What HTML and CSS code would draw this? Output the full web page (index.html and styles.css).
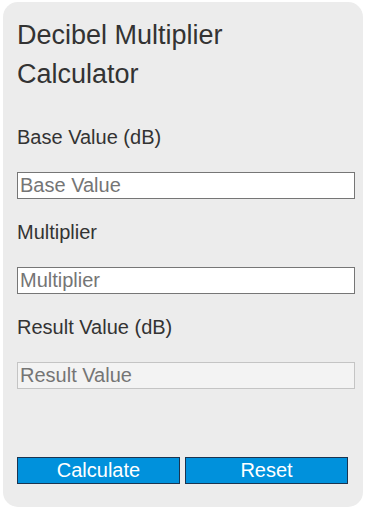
FILE: index.html
```html
<!DOCTYPE html>
<html lang="en">
<head>
    <meta charset="UTF-8">
    <meta name="viewport" content="width=device-width, initial-scale=1.0">
    <title>Decibel Multiplier Calculator</title>
    <link rel="stylesheet" href="styles.css">
</head>
<body>
    <div class="calculator">
        <h1 class="title">Decibel Multiplier Calculator</h1>
        <div class="field">
            <label for="base-value">Base Value (dB)</label>
            <input type="number" id="base-value" placeholder="Base Value">
        </div>
        <div class="field">
            <label for="multiplier">Multiplier</label>
            <input type="number" id="multiplier" placeholder="Multiplier">
        </div>
        <div class="field">
            <label for="result-value">Result Value (dB)</label>
            <input type="text" id="result-value" placeholder="Result Value" readonly>
        </div>
        <!-- calculate and reset -->
        <div class="buttons">
            <button id="calculate">Calculate</button>
            <button id="reset">Reset</button>
        </div>
    </div>
</body>
</html>
```

FILE: styles.css
```css
* {
    margin: 0;
    padding: 0;
}
body {
    font-family: "Liberation Sans", Arial, sans-serif;
    background-color: #fff;
    color: #333;
}
.calculator {
    width: 332px;
    margin: 2px 0 0 3px;
    padding: 14px 14px 23px 14px;
    background-color: #ececec;
    border-radius: 15px;
}
.title {
    max-width: 300px;
    font-size: 27px;
    font-weight: normal;
    line-height: 39px;
    margin-bottom: 31px;
}
.field label {
    display: block;
    font-size: 20px;
    line-height: 24px;
    margin-bottom: 23px;
}
/* input sticks out past the padding a bit, like the original */
.field input {
    display: block;
    box-sizing: border-box;
    width: 338px;
    height: 27px;
    font-family: inherit;
    font-size: 20px;
    padding: 0 2px;
    border: 1px solid #767676;
    background-color: #fff;
    color: #333;
    margin-bottom: 21px;
}
.field input::placeholder {
    color: #757575;
}
#result-value {
    background-color: #f3f3f3;
    border-color: #c4c4c4;
}
.buttons {
    display: flex;
    gap: 5px;
    margin-top: 68px;
}
.buttons button {
    width: 163px;
    height: 27px;
    font-family: inherit;
    font-size: 20px;
    color: #fff;
    background-color: #0091dc;
    border: 1px solid #1a3450;
}
```
